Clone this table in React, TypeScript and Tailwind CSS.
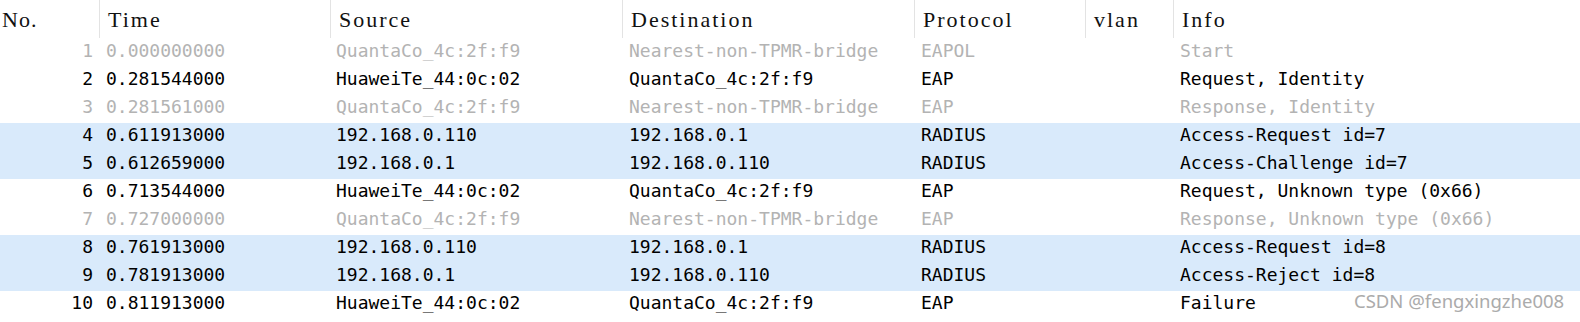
import React from "react";

type Row = {
  no: number;
  time: string;
  src: string;
  dst: string;
  proto: string;
  info: string;
  kind: "dim" | "normal" | "blue";
};

const rows: Row[] = [
  { no: 1, time: "0.000000000", src: "QuantaCo_4c:2f:f9", dst: "Nearest-non-TPMR-bridge", proto: "EAPOL", info: "Start", kind: "dim" },
  { no: 2, time: "0.281544000", src: "HuaweiTe_44:0c:02", dst: "QuantaCo_4c:2f:f9", proto: "EAP", info: "Request, Identity", kind: "normal" },
  { no: 3, time: "0.281561000", src: "QuantaCo_4c:2f:f9", dst: "Nearest-non-TPMR-bridge", proto: "EAP", info: "Response, Identity", kind: "dim" },
  { no: 4, time: "0.611913000", src: "192.168.0.110", dst: "192.168.0.1", proto: "RADIUS", info: "Access-Request id=7", kind: "blue" },
  { no: 5, time: "0.612659000", src: "192.168.0.1", dst: "192.168.0.110", proto: "RADIUS", info: "Access-Challenge id=7", kind: "blue" },
  { no: 6, time: "0.713544000", src: "HuaweiTe_44:0c:02", dst: "QuantaCo_4c:2f:f9", proto: "EAP", info: "Request, Unknown type (0x66)", kind: "normal" },
  { no: 7, time: "0.727000000", src: "QuantaCo_4c:2f:f9", dst: "Nearest-non-TPMR-bridge", proto: "EAP", info: "Response, Unknown type (0x66)", kind: "dim" },
  { no: 8, time: "0.761913000", src: "192.168.0.110", dst: "192.168.0.1", proto: "RADIUS", info: "Access-Request id=8", kind: "blue" },
  { no: 9, time: "0.781913000", src: "192.168.0.1", dst: "192.168.0.110", proto: "RADIUS", info: "Access-Reject id=8", kind: "blue" },
  { no: 10, time: "0.811913000", src: "HuaweiTe_44:0c:02", dst: "QuantaCo_4c:2f:f9", proto: "EAP", info: "Failure", kind: "normal" },
];

const headers = ["Time", "Source", "Destination", "Protocol", "vlan", "Info"];

export default function App() {
  return (
    <div className="relative w-[1580px] h-[322px] bg-white overflow-hidden">
      <div
        className="grid grid-cols-[99px_231px_292px_292px_171px_88px_1fr] h-[39px] text-[22px] leading-[40px] tracking-[2px] text-[#111]"
        style={{ fontFamily: '"Liberation Serif", serif' }}
      >
        <div className="pl-[2px] h-[38px] overflow-hidden whitespace-nowrap tracking-[1px]">No.</div>
        {headers.map((h) => (
          <div key={h} className="pl-[8px] h-[38px] border-l border-[#e3e3e3] overflow-hidden whitespace-nowrap">
            {h}
          </div>
        ))}
      </div>
      <div style={{ fontFamily: '"DejaVu Sans Mono", monospace' }} className="text-[18px] leading-[24px]">
        {rows.map((r) => {
          const color =
            r.kind === "dim" ? "text-[#b3b3b3]" : r.kind === "blue" ? "text-[#000000] bg-[#d9eafb]" : "text-[#000000]";
          return (
            <div
              key={r.no}
              className={`grid grid-cols-[99px_231px_292px_292px_171px_88px_1fr] h-[28px] whitespace-nowrap ${color}`}
            >
              <div className="text-right pr-[6px]">{r.no}</div>
              <div className="pl-[7px]">{r.time}</div>
              <div className="pl-[6px]">{r.src}</div>
              <div className="pl-[7px]">{r.dst}</div>
              <div className="pl-[7px]">{r.proto}</div>
              <div className="pl-[7px]"></div>
              <div className="pl-[7px]">{r.info}</div>
            </div>
          );
        })}
      </div>
      <div
        className="absolute left-[1354px] top-[289px] text-[18.5px] leading-[24px] text-[#ababab] whitespace-nowrap"
        style={{ fontFamily: '"Noto Sans", sans-serif' }}
      >
        CSDN @fengxingzhe008
      </div>
    </div>
  );
}
